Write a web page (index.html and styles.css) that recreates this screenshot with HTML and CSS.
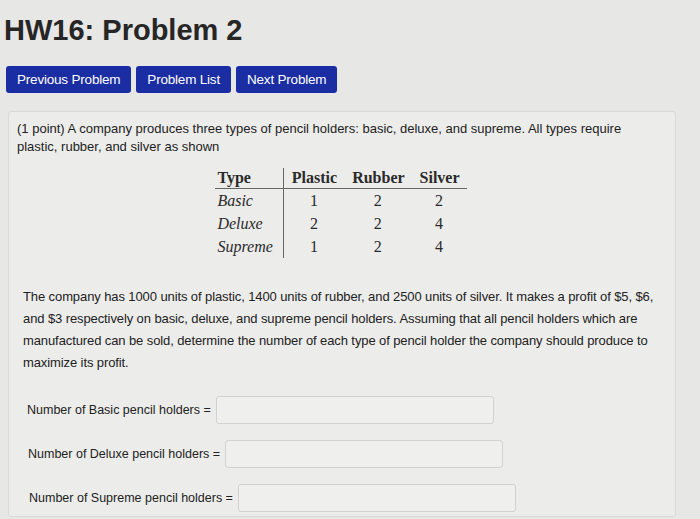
FILE: index.html
```html
<!DOCTYPE html>
<html>
  <head>
    <meta charset="utf-8">
    <title>HW16: Problem 2</title>
    <link rel="stylesheet" href="styles.css">
  </head>
  <body>
    <h1>HW16: Problem 2</h1>
    <nav class="nav">
      <button>Previous Problem</button>
      <button>Problem List</button>
      <button>Next Problem</button>
    </nav>
    <div class="problem">
      <p class="intro">(1 point) A company produces three types of pencil holders: basic, deluxe, and supreme. All types require plastic, rubber, and silver as shown</p>
      <table class="data">
        <thead>
          <tr><th class="type">Type</th><th>Plastic</th><th>Rubber</th><th>Silver</th></tr>
        </thead>
        <tbody>
          <tr><td class="type">Basic</td><td>1</td><td>2</td><td>2</td></tr>
          <tr><td class="type">Deluxe</td><td>2</td><td>2</td><td>4</td></tr>
          <tr><td class="type">Supreme</td><td>1</td><td>2</td><td>4</td></tr>
        </tbody>
      </table>
      <p class="text">The company has 1000 units of plastic, 1400 units of rubber, and 2500 units of silver. It makes a profit of $5, $6, and $3 respectively on basic, deluxe, and supreme pencil holders. Assuming that all pencil holders which are manufactured can be sold, determine the number of each type of pencil holder the company should produce to maximize its profit.</p>
      <div class="answers">
        <label class="row">Number of Basic pencil holders = <input type="text"></label>
        <label class="row shift1">Number of Deluxe pencil holders = <input type="text"></label>
        <label class="row shift2">Number of Supreme pencil holders = <input type="text"></label>
      </div>
    </div>
  </body>
</html>
```
FILE: styles.css
```css
html, body { margin: 0; padding: 0; }
body { background: #e7e7e5; font-family: "Liberation Sans", Arial, sans-serif; color: #222; padding: 0 24px 0 4px; }
h1 { font-size: 29px; font-weight: bold; margin: 0; padding-top: 14px; line-height: 32px; color: #262626; }
.nav { display: flex; gap: 5px; margin: 20px 0 0 2px; }
.nav button { background: #1b2da3; color: #fff; border: none; border-radius: 3px; font-family: "Liberation Sans", Arial, sans-serif; font-size: 13.5px; height: 27px; padding: 0 11px; letter-spacing: -0.2px; }
.problem { margin: 18px 0 0 4px; background: #ececea; border: 1px solid #d9d9d7; border-radius: 3px; padding: 8px 6px 4px 8px; }
.intro { margin: 0 36px 0 0; font-size: 13px; line-height: 18px; }
.data { margin: 12px auto 0; border-collapse: collapse; font-family: "Liberation Serif", "Times New Roman", serif; font-size: 16px; color: #2a2a2a; position: relative; left: -2px; }
.data th { font-weight: bold; padding: 1px 7px 1px 8px; border-bottom: 1.5px solid #666; text-align: center; }
.data td { text-align: center; padding: 0 6px; line-height: 23px; }
.data .type { text-align: left; padding-left: 2px; padding-right: 10px; border-right: 1px solid #666; font-style: italic; }
.data th.type { font-style: normal; }
.text { margin: 28px 0 0 6px; font-size: 13px; line-height: 22px; letter-spacing: -0.1px; }
.answers { margin: 22px 0 0 10px; display: flex; flex-direction: column; gap: 16px; }
.row { display: flex; align-items: center; font-size: 12.5px; }
.row input { margin-left: 5px; width: 278px; height: 28px; box-sizing: border-box; border: 1px solid #d2d2d0; border-radius: 3px; background: #efefed; }
.shift1 { margin-left: 1px; }
.shift2 { margin-left: 2px; }
```
